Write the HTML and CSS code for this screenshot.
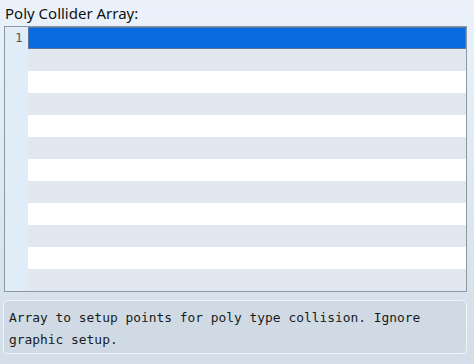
FILE: index.html
```html
<!DOCTYPE html>
<html lang="en">
<head>
    <meta charset="UTF-8">
    <title>Poly Collider Array</title>
    <link rel="stylesheet" href="styles.css">
</head>
<body>
    <div class="window">
        <div class="label">Poly Collider Array:</div>

        <div class="list">
            <div class="gutter">
                <div class="line-no">1</div>
            </div>
            <div class="rows" id="rows"></div>
        </div>

        <div class="help">
            Array to setup points for poly type collision. Ignore<br>
            graphic setup.
        </div>
    </div>

    <script>
        const rows = document.getElementById("rows");
        for (let i = 0; i < 12; i++) {
            const row = document.createElement("div");
            row.className = "row";
            if (i === 0) row.classList.add("selected");
            rows.appendChild(row);
        }
    </script>
</body>
</html>
```

FILE: styles.css
```css
* {
    margin: 0;
    padding: 0;
    box-sizing: border-box;
}

html, body {
    height: 100%;
}

body {
    font-family: 'DejaVu Sans', sans-serif;
    background: linear-gradient(#ebf2fc, #d3dee9);
    color: #222;
}

.window {
    padding: 0 7px 0 4px;
}

.label {
    height: 26px;
    padding: 2px 0 0 1px;
    font-family: 'Noto Sans', sans-serif;
    font-size: 15px;
    line-height: 22px;
    color: #111;
}

.list {
    display: grid;
    grid-template-columns: 23px 1fr;
    border: 1px solid #8d98a4;
    background: #fff;
}

.gutter {
    background: #e1ecf9;
}

.line-no {
    height: 22px;
    padding-right: 5px;
    text-align: right;
    font-size: 12px;
    line-height: 22px;
    color: #555;
}

.row {
    height: 22px;
}

.row:nth-child(even) {
    background: #e2e8ef;
}

.row.selected {
    background: #0a6ae2;
    border: 1px solid #56789e;
}

.help {
    margin: 8px 0 0 -1px;
    height: 54px;
    padding: 6px 5px 0;
    background: #cfdae5;
    border: 1px solid #eef3f9;
    border-radius: 4px;
    font-family: 'DejaVu Sans Mono', monospace;
    font-size: 12.9px;
    line-height: 22px;
    color: #1a1a1a;
}
```
